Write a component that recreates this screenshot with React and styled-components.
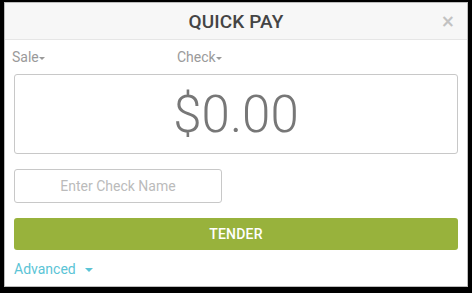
import React from "react";
import styled, { createGlobalStyle } from "styled-components";

const Global = createGlobalStyle`
  html, body { margin: 0; padding: 0; background: #000; }
  body { font-family: Roboto, "Liberation Sans", Arial, sans-serif; }
  * { box-sizing: border-box; }
`;

const Frame = styled.div`
  width: 472px;
  height: 293px;
  background: #000;
  padding: 2px 4px 6px 4px;
`;

const Modal = styled.div`
  height: 100%;
  background: #fff;
  border: 1px solid #bdbdbd;
  display: flex;
  flex-direction: column;
`;

const Header = styled.div`
  position: relative;
  height: 37px;
  background: #f7f7f7;
  border-bottom: 1px solid #e6e6e6;
  display: flex;
  align-items: center;
  justify-content: center;
`;

const Title = styled.h1`
  margin: 0;
  font-size: 19px;
  font-weight: 500;
  color: #444;
  letter-spacing: 0.1px;
  padding-top: 1px;
`;

const Close = styled.span`
  position: absolute;
  right: 12px;
  top: 8px;
  font-family: "DejaVu Sans", "Liberation Sans", sans-serif;
  font-size: 17px;
  font-weight: bold;
  color: #c2c2c2;
  line-height: 20px;
`;

const Body = styled.div`
  padding: 7px 9px 0 9px;
  display: flex;
  flex-direction: column;
`;

const SelectRow = styled.div`
  display: grid;
  grid-template-columns: 165px 1fr;
  margin-left: -2px;
  height: 20px;
  align-items: center;
`;

const Dropdown = styled.span`
  font-size: 14px;
  color: #9a9a9a;
  line-height: 20px;
  display: inline-flex;
  align-items: center;
`;

const Caret = styled.span`
  display: inline-block;
  width: 0;
  height: 0;
  margin-left: ${(p) => p.$gap || 0}px;
  border-top: ${(p) => p.$size || 3}px solid ${(p) => p.$color || "#9a9a9a"};
  border-left: ${(p) => p.$size || 3}px solid transparent;
  border-right: ${(p) => p.$size || 3}px solid transparent;
  margin-top: 2px;
`;

const AmountBox = styled.div`
  margin-top: 7px;
  height: 80px;
  border: 1px solid #c8c8c8;
  border-radius: 3px;
  display: flex;
  align-items: center;
  justify-content: center;
`;

const Amount = styled.span`
  font-size: 51px;
  font-weight: 300;
  color: #777;
  line-height: 1;
  margin-top: 1px;
`;

const NameInput = styled.input`
  margin-top: 15px;
  width: 208px;
  height: 34px;
  border: 1px solid #c8c8c8;
  border-radius: 3px;
  font-family: Roboto, "Liberation Sans", Arial, sans-serif;
  font-size: 14px;
  text-align: center;
  color: #555;
  outline: none;
  &::placeholder { color: #bbb; }
`;

const TenderButton = styled.button`
  margin-top: 15px;
  height: 32px;
  width: 100%;
  border: none;
  border-radius: 3px;
  background: #98b23c;
  color: #fff;
  font-family: Roboto, "Liberation Sans", Arial, sans-serif;
  font-size: 14px;
  font-weight: 500;
  letter-spacing: 0.2px;
`;

const Advanced = styled.div`
  margin-top: 9px;
  font-size: 14px;
  line-height: 20px;
  color: #5bc4d6;
  display: flex;
  align-items: center;
`;

export default function App() {
  return (
    <>
      <Global />
      <Frame>
        <Modal>
          <Header>
            <Title>QUICK PAY</Title>
            <Close>×</Close>
          </Header>
          <Body>
            <SelectRow>
              <Dropdown>
                Sale<Caret $size={3} />
              </Dropdown>
              <Dropdown>
                Check<Caret $size={3} />
              </Dropdown>
            </SelectRow>
            <AmountBox>
              <Amount>$0.00</Amount>
            </AmountBox>
            <NameInput placeholder="Enter Check Name" />
            <TenderButton>TENDER</TenderButton>
            <Advanced>
              Advanced
              <Caret $size={4} $gap={9} $color="#5bc4d6" />
            </Advanced>
          </Body>
        </Modal>
      </Frame>
    </>
  );
}
